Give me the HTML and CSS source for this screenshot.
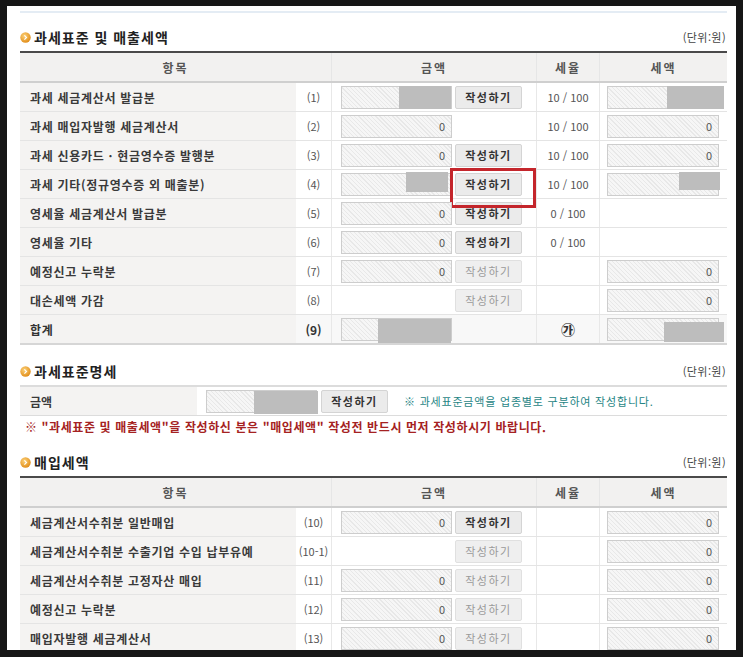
FILE: index.html
```html
<!DOCTYPE html>
<html lang="ko">
<head>
  <meta charset="UTF-8">
  <title>부가가치세 신고서</title>
  <link rel="stylesheet" href="styles.css">
</head>
<body>
  <div class="panel">
    <div class="topline"></div>

    <!-- 과세표준 및 매출세액 -->
    <div class="sec-head">
      <h2><svg class="dot" width="11" height="11" viewBox="0 0 11 11"><defs><radialGradient id="g1" cx="40%" cy="35%" r="70%"><stop offset="0" stop-color="#fcd27a"/><stop offset="1" stop-color="#e08a14"/></radialGradient></defs><circle cx="5.5" cy="5.5" r="5.2" fill="url(#g1)"/><path d="M4.4 3.4 L6.5 5.5 L4.4 7.6" fill="none" stroke="#fff" stroke-width="1.2"/></svg>과세표준 및 매출세액</h2>
      <span class="unit">(단위:원)</span>
    </div>
    <div class="sheet">
      <div class="head">
        <div class="h-item">항목</div>
        <div class="h-amt">금액</div>
        <div class="h-rate">세율</div>
        <div class="h-tax">세액</div>
      </div>
      <div class="row">
        <div class="c-name">과세 세금계산서 발급분</div>
        <div class="c-no">(1)</div>
        <div class="c-amt"><span class="field"><i class="mask" style="right:0;top:-1px;width:52px;height:23px"></i></span><button class="btn">작성하기</button></div>
        <div class="c-rate">10 / 100</div>
        <div class="c-tax"><span class="field wide"><i class="mask" style="left:59px;top:-1px;width:57px;height:23px"></i></span></div>
      </div>
      <div class="row">
        <div class="c-name">과세 매입자발행 세금계산서</div>
        <div class="c-no">(2)</div>
        <div class="c-amt"><span class="field">0</span></div>
        <div class="c-rate">10 / 100</div>
        <div class="c-tax"><span class="field wide">0</span></div>
      </div>
      <div class="row">
        <div class="c-name">과세 신용카드 · 현금영수증 발행분</div>
        <div class="c-no">(3)</div>
        <div class="c-amt"><span class="field">0</span><button class="btn">작성하기</button></div>
        <div class="c-rate">10 / 100</div>
        <div class="c-tax"><span class="field wide">0</span></div>
      </div>
      <div class="row">
        <div class="c-name">과세 기타(정규영수증 외 매출분)</div>
        <div class="c-no">(4)</div>
        <div class="c-amt"><span class="field"><i class="mask" style="left:64px;top:-2px;width:42px;height:20px"></i></span><span class="mark"><button class="btn">작성하기</button></span></div>
        <div class="c-rate">10 / 100</div>
        <div class="c-tax"><span class="field wide"><i class="mask" style="left:71px;top:-2px;width:41px;height:18px"></i></span></div>
      </div>
      <div class="row">
        <div class="c-name">영세율 세금계산서 발급분</div>
        <div class="c-no">(5)</div>
        <div class="c-amt"><span class="field">0</span><button class="btn">작성하기</button></div>
        <div class="c-rate">0 / 100</div>
        <div class="c-tax"></div>
      </div>
      <div class="row">
        <div class="c-name">영세율 기타</div>
        <div class="c-no">(6)</div>
        <div class="c-amt"><span class="field">0</span><button class="btn">작성하기</button></div>
        <div class="c-rate">0 / 100</div>
        <div class="c-tax"></div>
      </div>
      <div class="row">
        <div class="c-name">예정신고 누락분</div>
        <div class="c-no">(7)</div>
        <div class="c-amt"><span class="field">0</span><button class="btn off">작성하기</button></div>
        <div class="c-rate"></div>
        <div class="c-tax"><span class="field wide">0</span></div>
      </div>
      <div class="row">
        <div class="c-name">대손세액 가감</div>
        <div class="c-no">(8)</div>
        <div class="c-amt"><span class="blank"></span><button class="btn off">작성하기</button></div>
        <div class="c-rate"></div>
        <div class="c-tax"><span class="field wide">0</span></div>
      </div>
      <div class="row total">
        <div class="c-name">합계</div>
        <div class="c-no">(9)</div>
        <div class="c-amt"><span class="field"><i class="mask" style="left:36px;top:0;width:73px;height:24px"></i></span></div>
        <div class="c-rate"><span class="sym">㉮</span></div>
        <div class="c-tax"><span class="field wide"><i class="mask" style="left:56px;top:3px;width:60px;height:20px"></i></span></div>
      </div>
    </div>

    <!-- 과세표준명세 -->
    <div class="sec-head gap">
      <h2><svg class="dot" width="11" height="11" viewBox="0 0 11 11"><defs><radialGradient id="g2" cx="40%" cy="35%" r="70%"><stop offset="0" stop-color="#fcd27a"/><stop offset="1" stop-color="#e08a14"/></radialGradient></defs><circle cx="5.5" cy="5.5" r="5.2" fill="url(#g2)"/><path d="M4.4 3.4 L6.5 5.5 L4.4 7.6" fill="none" stroke="#fff" stroke-width="1.2"/></svg>과세표준명세</h2>
      <span class="unit">(단위:원)</span>
    </div>
    <div class="detail">
      <div class="d-name">금액</div>
      <span class="field"><i class="mask" style="left:47px;top:0;width:64px;height:23px"></i></span>
      <button class="btn">작성하기</button>
      <span class="note">※ 과세표준금액을 업종별로 구분하여 작성합니다.</span>
    </div>
    <p class="warn">※ "과세표준 및 매출세액"을 작성하신 분은 "매입세액" 작성전 반드시 먼저 작성하시기 바랍니다.</p>

    <!-- 매입세액 -->
    <div class="sec-head">
      <h2><svg class="dot" width="11" height="11" viewBox="0 0 11 11"><defs><radialGradient id="g3" cx="40%" cy="35%" r="70%"><stop offset="0" stop-color="#fcd27a"/><stop offset="1" stop-color="#e08a14"/></radialGradient></defs><circle cx="5.5" cy="5.5" r="5.2" fill="url(#g3)"/><path d="M4.4 3.4 L6.5 5.5 L4.4 7.6" fill="none" stroke="#fff" stroke-width="1.2"/></svg>매입세액</h2>
      <span class="unit">(단위:원)</span>
    </div>
    <div class="sheet">
      <div class="head">
        <div class="h-item">항목</div>
        <div class="h-amt">금액</div>
        <div class="h-rate">세율</div>
        <div class="h-tax">세액</div>
      </div>
      <div class="row">
        <div class="c-name">세금계산서수취분 일반매입</div>
        <div class="c-no">(10)</div>
        <div class="c-amt"><span class="field">0</span><button class="btn">작성하기</button></div>
        <div class="c-rate"></div>
        <div class="c-tax"><span class="field wide">0</span></div>
      </div>
      <div class="row">
        <div class="c-name">세금계산서수취분 수출기업 수입 납부유예</div>
        <div class="c-no">(10-1)</div>
        <div class="c-amt"><span class="blank"></span><button class="btn off">작성하기</button></div>
        <div class="c-rate"></div>
        <div class="c-tax"><span class="field wide">0</span></div>
      </div>
      <div class="row">
        <div class="c-name">세금계산서수취분 고정자산 매입</div>
        <div class="c-no">(11)</div>
        <div class="c-amt"><span class="field">0</span><button class="btn off">작성하기</button></div>
        <div class="c-rate"></div>
        <div class="c-tax"><span class="field wide">0</span></div>
      </div>
      <div class="row">
        <div class="c-name">예정신고 누락분</div>
        <div class="c-no">(12)</div>
        <div class="c-amt"><span class="field">0</span><button class="btn off">작성하기</button></div>
        <div class="c-rate"></div>
        <div class="c-tax"><span class="field wide">0</span></div>
      </div>
      <div class="row">
        <div class="c-name">매입자발행 세금계산서</div>
        <div class="c-no">(13)</div>
        <div class="c-amt"><span class="field">0</span><button class="btn off">작성하기</button></div>
        <div class="c-rate"></div>
        <div class="c-tax"><span class="field wide">0</span></div>
      </div>
    </div>
  </div>
</body>
</html>
```

FILE: styles.css
```css
/* Base */
* {
  margin: 0;
  padding: 0;
  box-sizing: border-box;
}

body {
  background: #161616;
  height: 657px;
  overflow: hidden;
  font-family: 'Noto Sans CJK KR', 'DejaVu Sans', sans-serif;
  font-size: 12px;
  color: #333;
}

/* White sheet */
.panel {
  background: #fff;
  margin: 6px 7px 0;
  height: 644px;
  overflow: hidden;
  padding: 0 9px 0 13px;
}

.topline {
  height: 2px;
  margin-top: 5px;
  background: #e4ecf4;
}

/* Section headings */
.sec-head {
  display: flex;
  align-items: center;
  justify-content: space-between;
  height: 28px;
  margin-top: 10px;
}

.sec-head.gap {
  margin-top: 12px;
}

.sec-head h2 {
  display: flex;
  align-items: center;
  gap: 3px;
  font-size: 14px;
  font-weight: 700;
  color: #222;
  letter-spacing: 1px;
}

.dot {
  display: block;
}

.unit {
  font-size: 11px;
  color: #444;
  letter-spacing: 0.4px;
  padding-right: 1px;
}

/* Tables */
.sheet {
  width: 707px;
}

.head {
  display: flex;
  height: 32px;
  border-top: 2px solid #4a4a4a;
  border-bottom: 2px solid #cfcfcf;
  background: #f2f1f0;
  font-weight: 700;
  color: #555;
  letter-spacing: 2px;
}

.head > div {
  display: flex;
  align-items: center;
  justify-content: center;
}

.h-item { width: 311px; }
.h-amt { width: 205px; border-left: 1px solid #e6e6e6; }
.h-rate { width: 63px; border-left: 1px solid #e6e6e6; }
.h-tax { width: 128px; border-left: 1px solid #e6e6e6; }

.row {
  display: flex;
  height: 29px;
  border-bottom: 1px solid #e4e4e4;
}

.row > div {
  display: flex;
  align-items: center;
}

.c-name {
  width: 276px;
  background: #f4f3f2;
  padding-left: 10px;
  font-weight: 700;
  color: #3a3a3a;
  letter-spacing: 0.7px;
}

.c-no {
  width: 35px;
  justify-content: center;
  font-size: 11px;
  color: #555;
  white-space: nowrap;
}

.c-amt {
  width: 205px;
  border-left: 1px solid #e8e8e8;
  padding-left: 9px;
  gap: 3px;
}

.c-rate {
  width: 63px;
  border-left: 1px solid #e8e8e8;
  justify-content: center;
  font-size: 11px;
  color: #555;
}

.c-tax {
  width: 128px;
  border-left: 1px solid #e8e8e8;
  padding-left: 7px;
}

.total {
  height: 30px;
  border-bottom: 2px solid #d6d6d6;
  background: #f8f8f8;
}

.total .c-name,
.total .c-no {
  font-weight: 700;
  color: #333;
}

.total .c-no {
  font-size: 12px;
}

.sym {
  font-size: 14px;
  font-weight: 700;
  color: #333;
}

/* Read-only amount boxes */
.field {
  position: relative;
  display: flex;
  align-items: center;
  justify-content: flex-end;
  width: 111px;
  height: 23px;
  padding-right: 6px;
  border: 1px solid #cdcdcd;
  background: repeating-linear-gradient(45deg, #f6f6f6 0, #f6f6f6 2px, #e8e8e8 2px, #e8e8e8 3px);
  font-size: 11px;
  color: #555;
}

.field.wide {
  width: 112px;
}

.blank {
  width: 111px;
}

.mask {
  position: absolute;
  background: #bdbdbd;
}

/* Buttons */
.btn {
  width: 67px;
  height: 23px;
  border: 1px solid #d4d4d4;
  border-radius: 2px;
  background: #ebebeb;
  font-family: inherit;
  font-size: 11px;
  font-weight: 700;
  color: #333;
  letter-spacing: 1.5px;
}

.btn.off {
  background: #efefef;
  border-color: #e0e0e0;
  font-weight: 400;
  color: #9a9a9a;
}

.mark {
  position: relative;
  display: flex;
}

.mark::after {
  content: '';
  position: absolute;
  left: -5px;
  top: -5px;
  width: 80px;
  height: 34px;
  border: 3px solid #c4262c;
}

/* 과세표준명세 row */
.detail {
  display: flex;
  align-items: center;
  width: 707px;
  height: 31px;
  border-top: 2px solid #dcdcdc;
  border-bottom: 1px solid #dcdcdc;
}

.d-name {
  align-self: stretch;
  display: flex;
  align-items: center;
  width: 177px;
  padding-left: 10px;
  background: #f4f3f2;
  font-weight: 700;
  color: #3a3a3a;
  margin-right: 9px;
}

.detail .btn {
  margin-left: 4px;
}

.note {
  margin-left: 16px;
  font-size: 11px;
  color: #1f8585;
  letter-spacing: 0.8px;
}

.warn {
  height: 22px;
  line-height: 22px;
  padding-left: 5px;
  font-size: 12px;
  font-weight: 700;
  color: #a52222;
  letter-spacing: 0.6px;
  white-space: nowrap;
}
```
